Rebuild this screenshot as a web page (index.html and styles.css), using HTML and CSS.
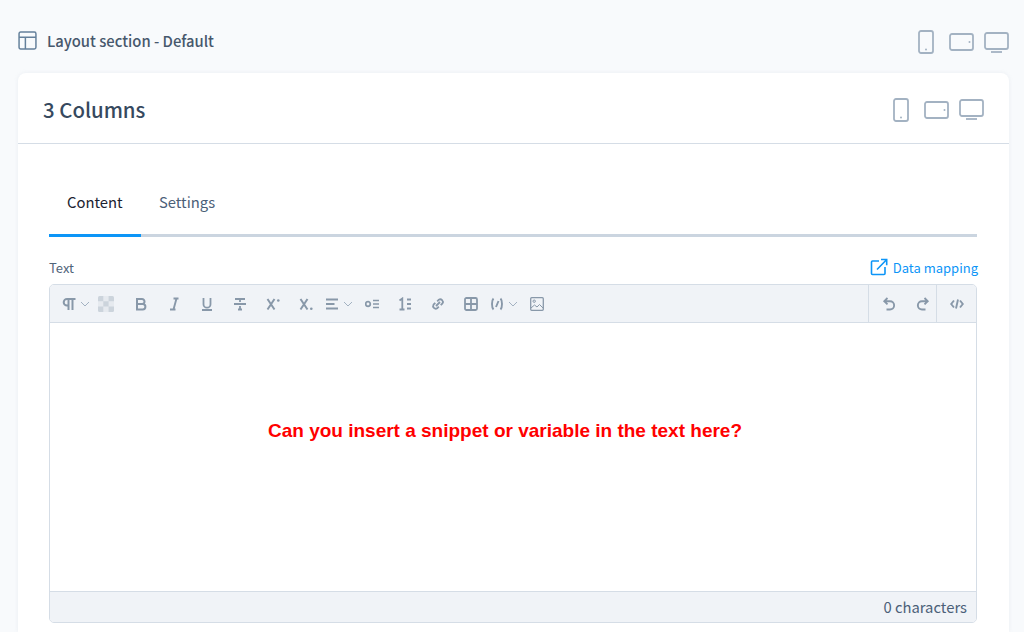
FILE: index.html
```html
<!DOCTYPE html>
<html lang="en">
<head>
<meta charset="utf-8">
<title>Layout section</title>
<link rel="stylesheet" href="styles.css">
</head>
<body>
<svg class="defs" width="0" height="0">
  <defs>
    <symbol id="phone" viewBox="0 0 16 24"><rect x="1" y="1" width="14" height="22" rx="2" fill="none" stroke="currentColor" stroke-width="1.800"/><circle cx="8" cy="19.500" r="1" fill="currentColor"/></symbol>
    <symbol id="tablet" viewBox="0 0 25 18"><rect x="1" y="1" width="23" height="16" rx="2" fill="none" stroke="currentColor" stroke-width="1.800"/><circle cx="20.500" cy="9" r="1" fill="currentColor"/></symbol>
    <symbol id="desktop" viewBox="0 0 25 21"><rect x="1" y="1" width="23" height="16" rx="2" fill="none" stroke="currentColor" stroke-width="1.800"/><path d="M7 20h11" stroke="currentColor" stroke-width="1.800"/></symbol>
    <symbol id="chev" viewBox="0 0 10 6"><path d="M1 1l4 4 4-4" fill="none" stroke="currentColor" stroke-width="1"/></symbol>
  </defs>
</svg>
<main class="page">
  <header class="section-head">
    <div class="section-title">
      <svg class="layout-icon" viewBox="0 0 18 18"><rect x="1" y="1" width="16" height="16" rx="1.500" fill="none" stroke="currentColor" stroke-width="1.400"/><path d="M1 6h16M7 6v11" fill="none" stroke="currentColor" stroke-width="1.400"/></svg>
      <span>Layout section - Default</span>
    </div>
    <div class="devices">
      <svg class="d-phone"><use href="#phone"/></svg>
      <svg class="d-tablet"><use href="#tablet"/></svg>
      <svg class="d-desktop"><use href="#desktop"/></svg>
    </div>
  </header>
  <section class="card">
    <div class="card-head">
      <h1>3 Columns</h1>
      <div class="devices">
        <svg class="d-phone"><use href="#phone"/></svg>
        <svg class="d-tablet"><use href="#tablet"/></svg>
        <svg class="d-desktop"><use href="#desktop"/></svg>
      </div>
    </div>
    <div class="card-body">
      <nav class="tabs">
        <a class="tab active">Content</a>
        <a class="tab">Settings</a>
      </nav>
      <div class="field-head">
        <span class="label">Text</span>
        <a class="mapping">
          <svg viewBox="0 0 18 18"><path d="M9 3H2.500A1 1 0 0 0 1.500 4v11.500a1 1 0 0 0 1 1H14a1 1 0 0 0 1-1V9" fill="none" stroke="currentColor" stroke-width="1.600"/><path d="M7 11.500L16.500 1.800M11 1.500h5.700v5.700" fill="none" stroke="currentColor" stroke-width="1.600"/></svg>
          <span>Data mapping</span>
        </a>
      </div>
      <div class="editor">
        <div class="toolbar">
          <div class="tools">
            <span class="tool w-para"><svg viewBox="0 0 14 14" class="ic"><path d="M13.500 2H5a3.300 3.300 0 0 0 0 6.600h1.500M6.500 2v11M10.500 2v11" fill="none" stroke="currentColor" stroke-width="2"/></svg><svg class="chev"><use href="#chev"/></svg></span>
            <span class="tool w-check"><svg viewBox="0 0 16 16" class="check"><rect width="16" height="16" rx="1.500" fill="#ccd4dc"/><path d="M5.300 0h5.300v5.300H5.300zM0 5.300h5.300v5.300H0zM10.600 5.300H16v5.300h-5.400zM5.300 10.600h5.300V16H5.300z" fill="#e6eaef"/></svg></span>
            <span class="tool w-b"><svg viewBox="0 0 14 14" class="ic"><path d="M3 2h5a2.500 2.500 0 0 1 0 5H3zM3 7h5.700a2.700 2.700 0 0 1 0 5.400H3zM3 1.500v11.400" fill="none" stroke="currentColor" stroke-width="2"/></svg></span>
            <span class="tool w-i"><svg viewBox="0 0 14 14" class="ic"><path d="M9.500 1.500L6.500 12.500M6.500 1.500h5M3 12.500h5.500" fill="none" stroke="currentColor" stroke-width="1.900"/></svg></span>
            <span class="tool w-u"><svg viewBox="0 0 14 14" class="ic"><path d="M3.500 1v6.200a3.500 3.500 0 0 0 7 0V1M2 13h10" fill="none" stroke="currentColor" stroke-width="1.800"/></svg></span>
            <span class="tool w-s"><svg viewBox="0 0 14 14" class="ic"><path d="M1 7h12M2 2h10M7 2v3M7 9v4M5 12.500h4" fill="none" stroke="currentColor" stroke-width="1.800"/></svg></span>
            <span class="tool w-sup"><svg viewBox="0 0 14 14" class="ic"><path d="M1.500 2l7 10.500M8.500 2l-7 10.500" fill="none" stroke="currentColor" stroke-width="2"/><circle cx="12.300" cy="3.500" r="1.300" fill="currentColor"/></svg></span>
            <span class="tool w-sub"><svg viewBox="0 0 14 14" class="ic"><path d="M1.500 2l7 10.500M8.500 2l-7 10.500" fill="none" stroke="currentColor" stroke-width="2"/><circle cx="12.300" cy="11.800" r="1.300" fill="currentColor"/></svg></span>
            <span class="tool w-align"><svg viewBox="0 0 14 14" class="ic"><path d="M1 2.500h12M1 7h8.500M1 11.500h12" fill="none" stroke="currentColor" stroke-width="1.800"/></svg><svg class="chev"><use href="#chev"/></svg></span>
            <span class="tool w-ul"><svg viewBox="0 0 14 14" class="ic"><circle cx="3" cy="7" r="2.300" fill="none" stroke="currentColor" stroke-width="1.700"/><path d="M8 3.500h6M8 7h6M8 10.500h6" fill="none" stroke="currentColor" stroke-width="1.600"/></svg></span>
            <span class="tool w-ol"><svg viewBox="0 0 14 14" class="ic"><path d="M1.500 3.500L4.300 1.500V12.500M1.500 12.500h5M9 2.500h4M9 7h4M9 11.500h4" fill="none" stroke="currentColor" stroke-width="1.800"/></svg></span>
            <span class="tool w-link"><svg viewBox="0 0 14 14" class="ic"><path d="M6.200 4.300l1.600-1.600a2.700 2.700 0 0 1 3.700 3.700L9.700 8.200M7.800 9.700l-1.600 1.600a2.700 2.700 0 0 1-3.700-3.700l1.800-1.800M5 9l4-4" fill="none" stroke="currentColor" stroke-width="1.800"/></svg></span>
            <span class="tool w-table"><svg viewBox="0 0 14 14" class="ic"><rect x="1" y="1" width="12" height="12" rx="1.500" fill="none" stroke="currentColor" stroke-width="1.800"/><path d="M1 7h12M7 1v12" stroke="currentColor" stroke-width="1.800"/></svg></span>
            <span class="tool w-var"><svg viewBox="0 0 14 14" class="ic"><path d="M3.500 1.500C1.500 3.500 1.500 10.500 3.500 12.500M10.500 1.500c2 2 2 9 0 11M8.500 4L6 10" fill="none" stroke="currentColor" stroke-width="1.900"/></svg><svg class="chev"><use href="#chev"/></svg></span>
            <span class="tool w-img"><svg viewBox="0 0 14 14" class="ic"><rect x=".7" y=".7" width="12.600" height="12.600" rx="1" fill="none" stroke="currentColor" stroke-width="1.300"/><circle cx="4.200" cy="4.200" r="1.200" fill="none" stroke="currentColor"/><path d="M1 11l3.500-3 2.500 2 2.500-2.500 3.500 3.500" fill="none" stroke="currentColor"/></svg></span>
          </div>
          <div class="tool-group history">
            <svg viewBox="0 0 14 14" class="ic"><path d="M5.500 1L2.300 4.200 5.500 7.400M2.500 4.200H8a4 4 0 0 1 0 8.300H4.500" fill="none" stroke="currentColor" stroke-width="1.900"/></svg>
            <svg viewBox="0 0 14 14" class="ic"><path d="M8.500 1l3.200 3.200-3.200 3.200M11.500 4.200H6a4 4 0 0 0 0 8.300h3.500" fill="none" stroke="currentColor" stroke-width="1.900"/></svg>
          </div>
          <div class="tool-group source">
            <svg viewBox="0 0 14 14" class="ic"><path d="M4 3.500L1.200 7 4 10.500M10 3.500L12.800 7 10 10.500M8 2.500L6 11.500" fill="none" stroke="currentColor" stroke-width="1.900"/></svg>
          </div>
        </div>
        <div class="editor-body">
          <p class="note">Can you insert a snippet or variable in the text here?</p>
        </div>
        <div class="status">0 characters</div>
      </div>
    </div>
  </section>
</main>
</body>
</html>
```
FILE: styles.css
```css
* { box-sizing: border-box; }
html, body { margin: 0; height: 632px; overflow: hidden; }
body {
  background: #f8fafc;
  color: #3f5369;
  font-family: "Noto Sans CJK SC", "Source Sans Pro", "Noto Sans", sans-serif;
}
.defs { position: absolute; }
.page { padding: 0 15px 0 18px; }

.section-head {
  display: flex;
  justify-content: space-between;
  align-items: center;
  height: 73px;
  padding-top: 8px;
}
.section-title {
  display: flex;
  align-items: center;
  gap: 10px;
  font-size: 14.800px;
  font-weight: 500;
  color: #47586c;
}
.layout-icon { width: 19px; height: 19px; color: #64809b; }

.devices {
  display: flex;
  align-items: center;
  padding-top: 3px;
  color: #a3b2c2;
}
.d-phone { width: 16px; height: 24px; margin-right: 15px; }
.d-tablet { width: 25px; height: 18px; margin-right: 10px; }
.d-desktop { width: 25px; height: 21px; }

.card {
  background: #fff;
  border-radius: 8px 8px 0 0;
  box-shadow: 0 0 4px rgba(150, 165, 185, .14);
  height: 559px;
}
.card-head {
  display: flex;
  justify-content: space-between;
  align-items: center;
  height: 71px;
  padding: 0 25px;
  border-bottom: 1px solid #d5dde6;
}
.card-head h1 {
  margin: 0;
  padding-top: 2px;
  font-size: 20.400px;
  font-weight: 500;
  color: #36495e;
}

.card-body { padding: 25px 32px 0 31px; }

.tabs {
  display: flex;
  height: 68px;
  border-bottom: 3px solid #cbd5e0;
}
.tab {
  height: 68px;
  padding: 0 18px;
  line-height: 66px;
  font-size: 14.800px;
  color: #4b6078;
}
.tab.active {
  width: 92px;
  color: #1a2230;
  border-bottom: 3px solid #0c95f7;
}

.field-head {
  display: flex;
  justify-content: space-between;
  align-items: center;
  height: 47px;
  padding: 13px 0 0;
  font-size: 13px;
}
.label { color: #50647a; }
.mapping {
  display: flex;
  align-items: center;
  gap: 5px;
  margin-right: -1px;
  color: #0c95f7;
}
.mapping svg { width: 18px; height: 18px; }

.editor {
  height: 339px;
  border: 1px solid #d5dde6;
  border-radius: 5px;
  display: flex;
  flex-direction: column;
  overflow: hidden;
}
.toolbar {
  display: flex;
  height: 38px;
  flex: none;
  background: #f0f3f7;
  border-bottom: 1px solid #d5dde6;
  color: #8898a9;
}
.tools {
  flex: 1;
  display: flex;
  align-items: center;
  padding-left: 12px;
}
.tool { display: flex; align-items: center; flex: none; }
.ic { width: 14px; height: 14px; display: block; flex: none; }
.chev { width: 10px; height: 6px; margin-left: 4px; color: #a3b2c2; }
.check { width: 16px; height: 16px; display: block; }
.w-para { width: 36px; }
.w-check { width: 36px; }
.w-b, .w-i, .w-u, .w-s, .w-sup, .w-ul, .w-ol, .w-link { width: 33px; }
.w-sub, .w-table { width: 26px; }
.w-align, .w-var { width: 40px; }

.tool-group {
  display: flex;
  align-items: center;
  border-left: 1px solid #d5dde6;
}
.history { width: 68px; padding-left: 13px; gap: 20px; }
.source { width: 40px; padding-left: 13px; }

.editor-body {
  flex: 1;
  display: flex;
  justify-content: center;
  padding: 96px 16px 0 0;
  background: #fff;
}
.note {
  margin: 0;
  font-family: "Liberation Sans", Arial, sans-serif;
  font-weight: 700;
  font-size: 19px;
  line-height: 24px;
  color: #f00;
}
.status {
  height: 31px;
  flex: none;
  background: #f0f3f7;
  border-top: 1px solid #d5dde6;
  padding-right: 9px;
  text-align: right;
  line-height: 30px;
  font-size: 14.800px;
  color: #4b6078;
}
```
